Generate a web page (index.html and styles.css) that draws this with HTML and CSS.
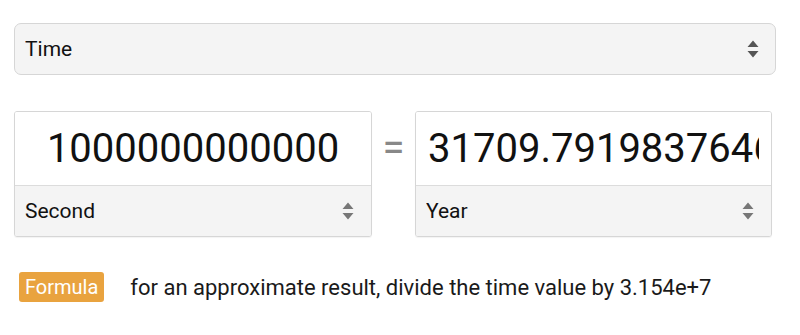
FILE: index.html
```html
<!DOCTYPE html>
<html lang="en">
<head>
    <meta charset="UTF-8">
    <meta name="viewport" content="width=device-width, initial-scale=1.0">
    <title>Time Converter</title>
    <link rel="stylesheet" href="styles.css">
</head>
<body>

<div class="converter">
    <!-- Category picker -->
    <div class="picker category">
        <select class="category-select">
            <option selected>Time</option>
            <option>Length</option>
            <option>Mass</option>
        </select>
        <svg class="arrows" width="12" height="18" viewBox="0 0 12 18">
            <path d="M6 0.5 L11.5 7 L0.5 7 Z M0.5 11 L11.5 11 L6 17.5 Z" fill="#555"/>
        </svg>
    </div>

    <div class="row">
        <div class="unit-box">
            <input class="value" type="text" value="1000000000000">
            <div class="picker">
                <select class="unit-select">
                    <option selected>Second</option>
                    <option>Minute</option>
                    <option>Hour</option>
                </select>
                <svg class="arrows" width="12" height="18" viewBox="0 0 12 18">
                    <path d="M6 0.5 L11.5 7 L0.5 7 Z M0.5 11 L11.5 11 L6 17.5 Z" fill="#777"/>
                </svg>
            </div>
        </div>

        <div class="equals">=</div>

        <div class="unit-box">
            <input class="value result" type="text" value="31709.7919837646">
            <div class="picker">
                <select class="unit-select">
                    <option>Day</option>
                    <option selected>Year</option>
                </select>
                <svg class="arrows" width="12" height="18" viewBox="0 0 12 18">
                    <path d="M6 0.5 L11.5 7 L0.5 7 Z M0.5 11 L11.5 11 L6 17.5 Z" fill="#777"/>
                </svg>
            </div>
        </div>
    </div>

    <div class="formula">
        <span class="badge">Formula</span>
        <span class="formula-text">for an approximate result, divide the time value by 3.154e+7</span>
    </div>
</div>

</body>
</html>
```

FILE: styles.css
```css
/* Basic Reset */
* {
    margin: 0;
    padding: 0;
    box-sizing: border-box;
}

body {
    font-family: 'Roboto', 'Liberation Sans', sans-serif;
    background: #fff;
    color: #111;
    padding: 23px 24px 0 14px;
}

.converter {
    width: 762px;
}

.picker {
    position: relative;
}

.picker select {
    appearance: none;
    -webkit-appearance: none;
    width: 100%;
    font-family: inherit;
    font-size: 21px;
    color: #111;
    background: #f4f4f4;
    border: none;
    outline: none;
    padding: 0 40px 0 10px;
}

.picker .arrows {
    position: absolute;
    right: 17px;
    top: 50%;
    margin-top: -9px;
    pointer-events: none;
}

.category-select {
    height: 52px;
    border: 1px solid #d6d6d6 !important;
    border-radius: 7px;
}

.row {
    display: flex;
    align-items: flex-start;
    margin-top: 36px;
}

.unit-box {
    width: 358px;
    border: 1px solid #d6d6d6;
    border-radius: 3px;
    overflow: hidden;
    box-shadow: 0 1px 1px rgba(0, 0, 0, 0.05);
}

.unit-box + .equals + .unit-box {
    width: 357px;
}

.value {
    display: block;
    width: 100%;
    height: 73px;
    border: none;
    outline: none;
    font-family: inherit;
    font-size: 40px;
    color: #111;
    text-align: center;
    padding: 0 12px;
    background: #fff;
}

.unit-select {
    height: 51px;
    border-top: 1px solid #dcdcdc !important;
}

.equals {
    width: 43px;
    height: 74px;
    display: flex;
    align-items: center;
    justify-content: center;
    font-size: 40px;
    color: #888;
    padding-bottom: 2px;
}

.formula {
    display: flex;
    align-items: center;
    margin-top: 35px;
    padding-left: 5px;
}

.badge {
    background: #e9a33f;
    color: #fff;
    font-size: 20px;
    height: 30px;
    line-height: 30px;
    padding: 0 6px;
    border-radius: 3px;
}

.formula-text {
    font-size: 22px;
    color: #1a1a1a;
    margin-left: 26px;
}
```
